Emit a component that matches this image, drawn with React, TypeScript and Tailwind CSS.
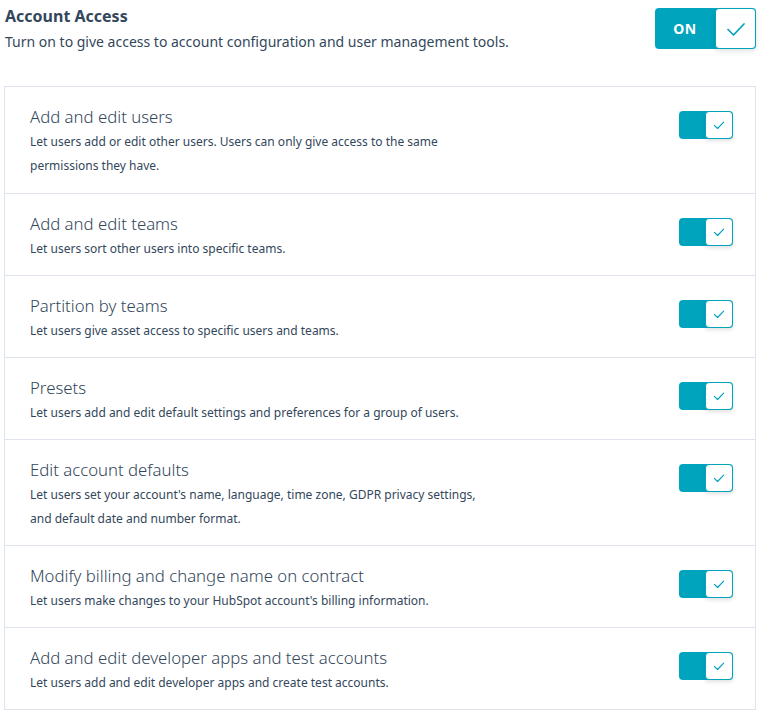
import React from "react";

const rows = [
  {
    title: "Add and edit users",
    desc: "Let users add or edit other users. Users can only give access to the same permissions they have.",
  },
  { title: "Add and edit teams", desc: "Let users sort other users into specific teams." },
  { title: "Partition by teams", desc: "Let users give asset access to specific users and teams." },
  { title: "Presets", desc: "Let users add and edit default settings and preferences for a group of users." },
  {
    title: "Edit account defaults",
    desc: "Let users set your account's name, language, time zone, GDPR privacy settings, and default date and number format.",
  },
  {
    title: "Modify billing and change name on contract",
    desc: "Let users make changes to your HubSpot account's billing information.",
  },
  {
    title: "Add and edit developer apps and test accounts",
    desc: "Let users add and edit developer apps and create test accounts.",
  },
];

function Check({ size, w }: { size: number; w: number }) {
  return (
    <svg width={size} height={size} viewBox="0 0 24 24" fill="none">
      <path d="M4 12.5l5.5 5.5L20 7" stroke="#00a4bd" strokeWidth={w} strokeLinecap="round" strokeLinejoin="round" />
    </svg>
  );
}

function SmallToggle() {
  return (
    <div className="flex h-[28px] w-[54px] shrink-0 rounded-[4px] bg-[#00a4bd]">
      <div className="ml-auto flex h-[28px] w-[28px] items-center justify-center rounded-[4px] border border-[#00a4bd] bg-white shadow-[0_2px_4px_rgba(0,0,0,0.12)]">
        <Check size={14} w={2} />
      </div>
    </div>
  );
}

export default function App() {
  return (
    <div
      className="min-h-[717px] bg-white px-[4px] pt-[3px] text-[#33475b]"
      style={{ fontFamily: '"Noto Sans", Lato, sans-serif' }}
    >
      <div className="flex items-start justify-between">
        <div className="pl-[1px]">
          <div className="text-[16px] font-bold leading-[26px]">Account Access</div>
          <div className="mt-[1px] text-[14px] leading-[24px]">
            Turn on to give access to account configuration and user management tools.
          </div>
        </div>
        <div className="mr-[2px] mt-[5px] flex h-[41px] w-[101px] rounded-[4px] bg-[#00a4bd]">
          <div className="flex w-[60px] items-center justify-center text-[14px] font-bold tracking-[0.5px] text-white">
            ON
          </div>
          <div className="flex flex-1 items-center justify-center rounded-[4px] border border-[#00a4bd] bg-white shadow-[0_2px_5px_rgba(0,0,0,0.12)]">
            <Check size={24} w={1.75} />
          </div>
        </div>
      </div>

      <div className="mt-[32px] mr-[2px] border border-[#dfe3eb]">
        {rows.map((r, i) => (
          <div
            key={r.title}
            className={`flex items-start justify-between pl-[25px] pr-[22px] pt-[18px] ${
              i > 0 ? "border-t border-[#dfe3eb] pb-[14px]" : "pb-[15px]"
            }`}
          >
            <div className="max-w-[460px]">
              <div className="text-[16.75px] leading-[24px] font-light">{r.title}</div>
              <div className="mt-[1px] text-[12px] leading-[24px]">{r.desc}</div>
            </div>
            <div className="mt-[6px]">
              <SmallToggle />
            </div>
          </div>
        ))}
      </div>
    </div>
  );
}
